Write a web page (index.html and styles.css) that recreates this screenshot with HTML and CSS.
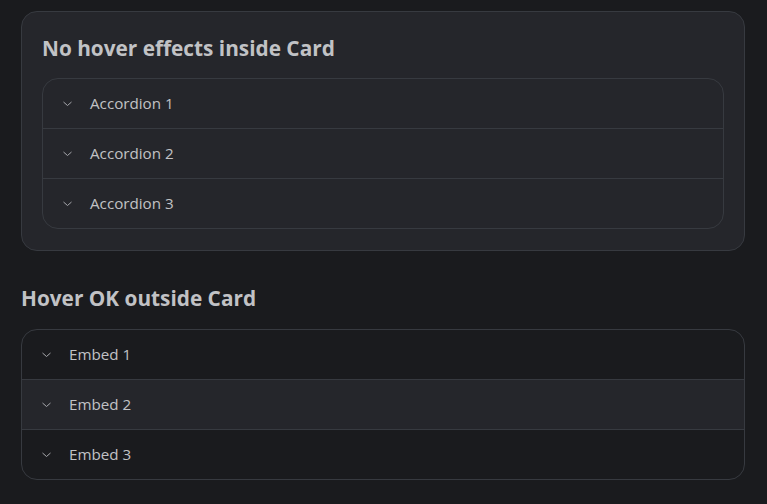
FILE: index.html
```html
<!DOCTYPE html>
<html lang="en">
<head>
<meta charset="utf-8">
<link rel="stylesheet" href="styles.css">
</head>
<body>
<main class="page">
  <section class="card">
    <h3 class="title">No hover effects inside Card</h3>
    <div class="accordion">
      <div class="item"><button class="control"><span class="chev"><svg viewBox="0 0 15 15" width="15" height="15"><path d="M3.5 6l4 3.5L11.5 6" fill="none" stroke="currentColor" stroke-width="1"/></svg></span><span class="label">Accordion 1</span></button></div>
      <div class="item"><button class="control"><span class="chev"><svg viewBox="0 0 15 15" width="15" height="15"><path d="M3.5 6l4 3.5L11.5 6" fill="none" stroke="currentColor" stroke-width="1"/></svg></span><span class="label">Accordion 2</span></button></div>
      <div class="item"><button class="control"><span class="chev"><svg viewBox="0 0 15 15" width="15" height="15"><path d="M3.5 6l4 3.5L11.5 6" fill="none" stroke="currentColor" stroke-width="1"/></svg></span><span class="label">Accordion 3</span></button></div>
    </div>
  </section>
  <h3 class="title outside">Hover OK outside Card</h3>
  <div class="accordion">
    <div class="item"><button class="control"><span class="chev"><svg viewBox="0 0 15 15" width="15" height="15"><path d="M3.5 6l4 3.5L11.5 6" fill="none" stroke="currentColor" stroke-width="1"/></svg></span><span class="label">Embed 1</span></button></div>
    <div class="item"><button class="control hovered"><span class="chev"><svg viewBox="0 0 15 15" width="15" height="15"><path d="M3.5 6l4 3.5L11.5 6" fill="none" stroke="currentColor" stroke-width="1"/></svg></span><span class="label">Embed 2</span></button></div>
    <div class="item"><button class="control"><span class="chev"><svg viewBox="0 0 15 15" width="15" height="15"><path d="M3.5 6l4 3.5L11.5 6" fill="none" stroke="currentColor" stroke-width="1"/></svg></span><span class="label">Embed 3</span></button></div>
  </div>
</main>
</body>
</html>
```
FILE: styles.css
```css
* { box-sizing: border-box; }
html, body {
  margin: 0;
  background: #1a1b1e;
  color: #c1c2c5;
  font-family: "Open Sans", "Noto Sans", sans-serif;
}
.page {
  padding: 11px 22px 20px 21px;
}
.card {
  background: #25262b;
  border: 1px solid #373a40;
  border-radius: 16px;
  padding: 22px 20px 21px;
}
.title {
  margin: 0 0 16px;
  font-size: 20.8px;
  line-height: 28px;
  font-weight: 700;
  color: #c1c2c5;
}
.outside {
  margin-top: 33px;
  margin-bottom: 17px;
}
.accordion {
  border: 1px solid #373a40;
  border-radius: 16px;
  overflow: hidden;
}
.item + .item {
  border-top: 1px solid #373a40;
}
.control {
  display: flex;
  align-items: center;
  width: 100%;
  height: 49px;
  padding: 0 16px;
  background: transparent;
  border: 0;
  color: #c1c2c5;
  font: inherit;
  font-size: 15.2px;
  text-align: left;
  cursor: pointer;
}
.control.hovered {
  background: #25262b;
}
.chev {
  display: flex;
  align-items: center;
  justify-content: center;
  width: 16px;
  height: 16px;
  margin-right: 15px;
  color: #a6a7ab;
}
.label {
  line-height: 1.55;
}
```
